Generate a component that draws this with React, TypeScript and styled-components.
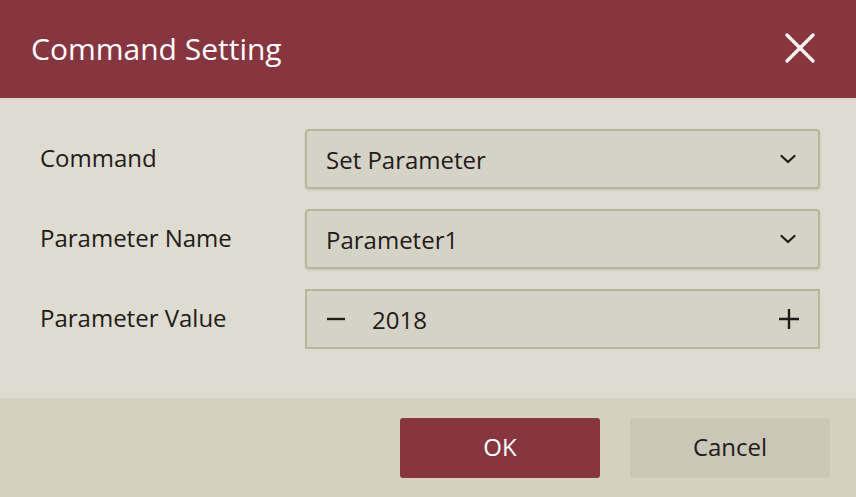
import React from "react";
import styled, { createGlobalStyle } from "styled-components";

const Global = createGlobalStyle`
  html, body { margin: 0; padding: 0; }
  body {
    width: 856px;
    height: 497px;
    overflow: hidden;
    font-family: "Open Sans", "Noto Sans", sans-serif;
    background: #dedcd0;
  }
`;

const Dialog = styled.div`
  width: 856px;
  height: 497px;
  display: flex;
  flex-direction: column;
  background: #dedcd0;
`;

const Header = styled.header`
  height: 98px;
  flex: none;
  background: #87353f;
  display: flex;
  align-items: center;
  justify-content: space-between;
  padding: 0 40px 0 31px;
  box-sizing: border-box;
`;

const Title = styled.h1`
  margin: 0;
  font-size: 30px;
  font-weight: 400;
  color: #ffffff;
  padding-bottom: 1px;
`;

const CloseButton = styled.button`
  width: 34px;
  height: 34px;
  border: 0;
  padding: 0;
  background: transparent;
  display: flex;
  align-items: center;
  justify-content: center;
  cursor: pointer;
  margin-right: -1px;
  margin-bottom: 2px;
`;

const Body = styled.div`
  flex: 1;
  padding: 31px 36px 0 40px;
  display: grid;
  grid-template-columns: 265px 1fr;
  grid-auto-rows: 60px;
  row-gap: 20px;
  align-content: start;
`;

const Label = styled.label`
  font-size: 24px;
  color: #241a18;
  display: flex;
  align-items: center;
  padding-bottom: 3px;
`;

const Field = styled.div<{ $square?: boolean }>`
  box-sizing: border-box;
  height: 60px;
  border: 2px solid #bab598;
  border-radius: ${(p) => (p.$square ? "0" : "4px")};
  background: #d5d3c6;
  box-shadow: ${(p) => (p.$square ? "none" : "0 1px 2px rgba(80, 70, 40, 0.18)")};
  display: flex;
  align-items: center;
  padding: ${(p) => (p.$square ? "0 18px 0 19px" : "0 21px 0 19px")};
  font-size: 24px;
  color: #241a18;
`;

const FieldText = styled.span`
  flex: 1;
`;

const NumberText = styled.span`
  flex: 1;
  padding-left: 26px;
`;

const IconWrap = styled.span`
  display: flex;
  align-items: center;
  justify-content: center;
`;

const Footer = styled.footer`
  height: 99px;
  flex: none;
  background: #d4d1c2;
  display: flex;
  align-items: center;
  justify-content: flex-end;
  gap: 30px;
  padding: 1px 26px 0 0;
  box-sizing: border-box;
`;

const Button = styled.button<{ $primary?: boolean }>`
  width: 200px;
  height: 60px;
  border: 0;
  border-radius: 3px;
  font-family: inherit;
  font-size: 24px;
  padding: 0 0 3px;
  background: ${(p) => (p.$primary ? "#87353f" : "#cac7b8")};
  color: ${(p) => (p.$primary ? "#ffffff" : "#241a18")};
  cursor: pointer;
`;

const Chevron = () => (
  <svg width="18" height="12" viewBox="0 0 18 12">
    <path d="M2.5 3 L9 9 L15.5 3" fill="none" stroke="#241a18" strokeWidth="2.2" strokeLinecap="round" strokeLinejoin="round" />
  </svg>
);

const Minus = () => (
  <svg width="20" height="20" viewBox="0 0 20 20">
    <path d="M1 10 H19" stroke="#241a18" strokeWidth="2.4" />
  </svg>
);

const Plus = () => (
  <svg width="22" height="22" viewBox="0 0 22 22">
    <path d="M1 11 H21 M11 1 V21" stroke="#241a18" strokeWidth="2.4" />
  </svg>
);

const CloseIcon = () => (
  <svg width="30" height="30" viewBox="0 0 30 30">
    <path d="M2 2 L28 28 M28 2 L2 28" stroke="#ffffff" strokeWidth="3.2" strokeLinecap="round" />
  </svg>
);

export default function App() {
  return (
    <>
      <Global />
      <Dialog>
        <Header>
          <Title>Command Setting</Title>
          <CloseButton aria-label="Close">
            <CloseIcon />
          </CloseButton>
        </Header>
        <Body>
          <Label>Command</Label>
          <Field>
            <FieldText>Set Parameter</FieldText>
            <IconWrap><Chevron /></IconWrap>
          </Field>
          <Label>Parameter Name</Label>
          <Field>
            <FieldText>Parameter1</FieldText>
            <IconWrap><Chevron /></IconWrap>
          </Field>
          <Label>Parameter Value</Label>
          <Field $square>
            <IconWrap><Minus /></IconWrap>
            <NumberText>2018</NumberText>
            <IconWrap><Plus /></IconWrap>
          </Field>
        </Body>
        <Footer>
          <Button $primary>OK</Button>
          <Button>Cancel</Button>
        </Footer>
      </Dialog>
    </>
  );
}
